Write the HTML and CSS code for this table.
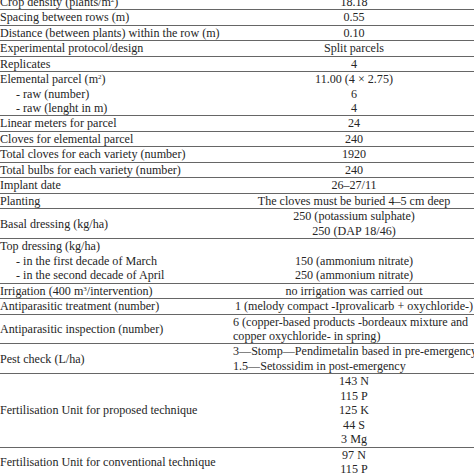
FILE: index.html
```html
<!DOCTYPE html>
<html>
<head>
<meta charset="utf-8">
<link rel="stylesheet" href="styles.css">
</head>
<body>
<div class="page">
<table class="t">
<tr><td class="l">Crop density (plants/m<sup>2</sup>)</td><td class="r">18.18</td></tr>
<tr><td class="l">Spacing between rows (m)</td><td class="r">0.55</td></tr>
<tr><td class="l">Distance (between plants) within the row (m)</td><td class="r">0.10</td></tr>
<tr><td class="l">Experimental protocol/design</td><td class="r">Split parcels</td></tr>
<tr><td class="l">Replicates</td><td class="r">4</td></tr>
<tr><td class="l top">Elemental parcel (m<sup>2</sup>)<br><span class="sub">- raw (number)</span><br><span class="sub">- raw (lenght in m)</span></td><td class="r">11.00 (4 × 2.75)<br>6<br>4</td></tr>
<tr><td class="l">Linear meters for parcel</td><td class="r">24</td></tr>
<tr><td class="l">Cloves for elemental parcel</td><td class="r">240</td></tr>
<tr><td class="l">Total cloves for each variety (number)</td><td class="r">1920</td></tr>
<tr><td class="l">Total bulbs for each variety (number)</td><td class="r">240</td></tr>
<tr><td class="l">Implant date</td><td class="r">26–27/11</td></tr>
<tr><td class="l">Planting</td><td class="r">The cloves must be buried 4–5 cm deep</td></tr>
<tr><td class="l">Basal dressing (kg/ha)</td><td class="r">250 (potassium sulphate)<br>250 (DAP 18/46)</td></tr>
<tr><td class="l top">Top dressing (kg/ha)<br><span class="sub">- in the first decade of March</span><br><span class="sub">- in the second decade of April</span></td><td class="r"><br>150 (ammonium nitrate)<br>250 (ammonium nitrate)</td></tr>
<tr><td class="l">Irrigation (400 m<sup>3</sup>/intervention)</td><td class="r">no irrigation was carried out</td></tr>
<tr><td class="l">Antiparasitic treatment (number)</td><td class="r">1 (melody compact -Iprovalicarb + oxychloride-)</td></tr>
<tr><td class="l">Antiparasitic inspection (number)</td><td class="r left">6 (copper-based products -bordeaux mixture and<br>copper oxychloride- in spring)</td></tr>
<tr><td class="l">Pest check (L/ha)</td><td class="r left">3—Stomp—Pendimetalin based in pre-emergency<br>1.5—Setossidim in post-emergency</td></tr>
<tr><td class="l">Fertilisation Unit for proposed technique</td><td class="r">143 N<br>115 P<br>125 K<br>44 S<br>3 Mg</td></tr>
<tr><td class="l">Fertilisation Unit for conventional technique</td><td class="r">97 N<br>115 P</td></tr>
</table>
</div>
</body>
</html>
```

FILE: styles.css
```css
html, body {
  margin: 0;
  padding: 0;
  background: #ffffff;
}
.page {
  width: 474px;
  height: 474px;
  overflow: hidden;
}
.t {
  margin-top: -5.3px;
  width: 475px;
  border-collapse: collapse;
  font-family: "Liberation Serif", "Times New Roman", serif;
  font-size: 12.1px;
  line-height: 14.47px;
  color: #262626;
  table-layout: fixed;
}
.t td {
  padding: 0;
  border-bottom: 1px solid #666666;
  vertical-align: middle;
  white-space: nowrap;
}
.t td.l {
  width: 233px;
  text-align: left;
}
.t td.r {
  width: 242px;
  text-align: center;
}
.t td.left {
  text-align: left;
}
.t td.top {
  vertical-align: top;
}
.sub {
  padding-left: 16px;
}
sup {
  font-size: 7px;
  line-height: 0;
  vertical-align: 4px;
}
```
